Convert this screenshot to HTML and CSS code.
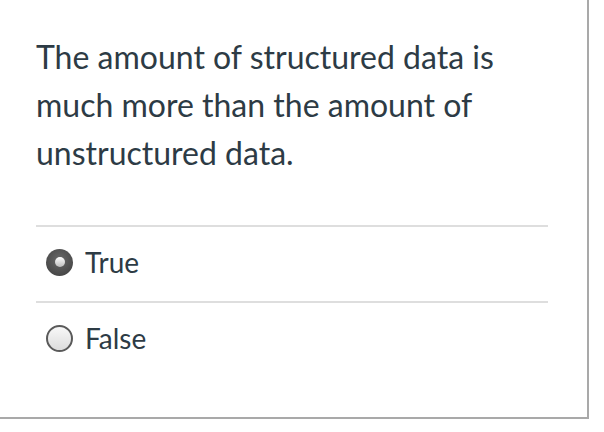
FILE: index.html
```html
<!DOCTYPE html>
<html>
<head>
<meta charset="utf-8">
<link rel="stylesheet" href="styles.css">
</head>
<body>
<div class="card">
  <div class="question">The amount of structured data is much more than the amount of unstructured data.</div>
  <div class="answers">
    <div class="answer">
      <span class="radio checked"><span class="dot"></span></span>
      <span class="label">True</span>
    </div>
    <div class="answer">
      <span class="radio"></span>
      <span class="label">False</span>
    </div>
  </div>
</div>
</body>
</html>
```
FILE: styles.css
```css
html, body {
  margin: 0;
  padding: 0;
  background: #ffffff;
}
body {
  font-family: Lato, "Open Sans", sans-serif;
  color: #2d3b45;
}
.card {
  box-sizing: border-box;
  width: 589px;
  height: 419px;
  border-right: 2px solid #a9a9a9;
  border-bottom: 2px solid #a9a9a9;
  padding: 33px 39px 0 36px;
}
.question {
  font-size: 32px;
  line-height: 48px;
  width: 500px;
}
.answers {
  margin-top: 48px;
}
.answer {
  box-sizing: border-box;
  display: flex;
  align-items: center;
  gap: 12px;
  height: 76px;
  border-top: 2px solid #dedede;
  padding-left: 10px;
  padding-bottom: 4px;
}
.radio {
  box-sizing: border-box;
  width: 27px;
  height: 27px;
  border-radius: 50%;
  border: 2px solid #5a5a5a;
  background: linear-gradient(#f8f8f8, #dcdcdc);
  display: flex;
  align-items: center;
  justify-content: center;
}
.radio.checked {
  border: none;
  background: radial-gradient(circle at 50% 40%, #6a6a6a, #3c3c3c);
}
.dot {
  width: 10px;
  height: 10px;
  border-radius: 50%;
  background: linear-gradient(#ffffff, #bdbdbd);
}
.label {
  font-size: 28px;
  line-height: 1;
}
```
